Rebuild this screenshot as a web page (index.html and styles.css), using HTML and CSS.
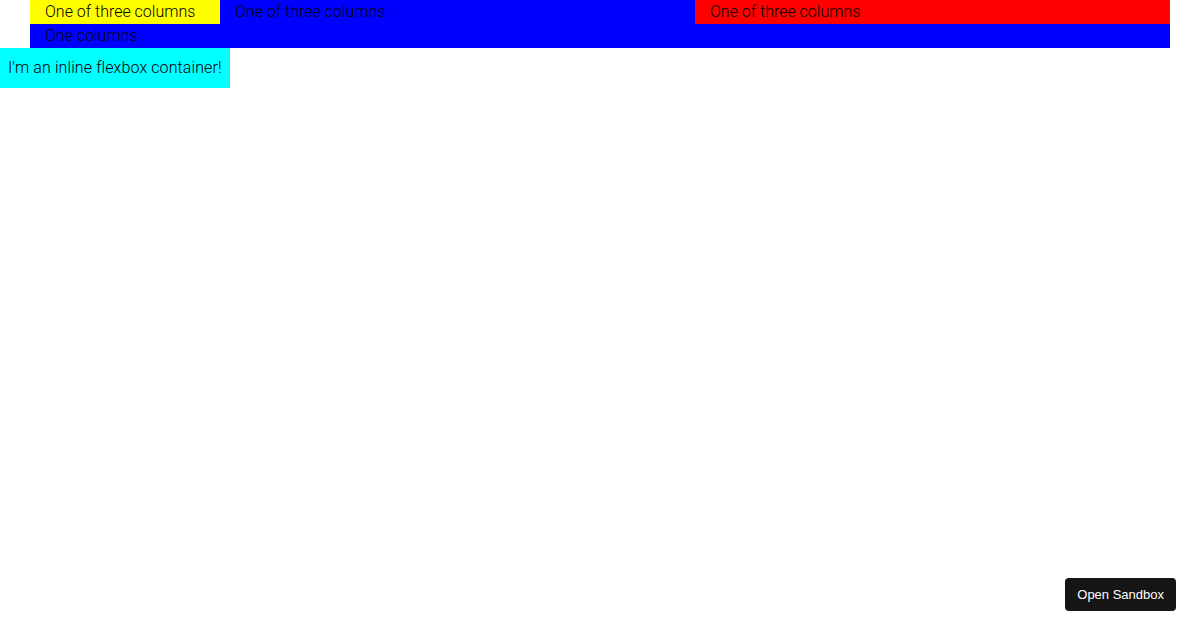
FILE: index.html
```html
<!DOCTYPE html>
<html>
<head>
<meta charset="utf-8">
<link rel="stylesheet" href="styles.css">
</head>
<body>
<div class="row">
  <div class="col col-yellow">One of three columns</div>
  <div class="col col-blue">One of three columns</div>
  <div class="col col-red">One of three columns</div>
</div>
<div class="row">
  <div class="col col-blue">One columns</div>
</div>
<div class="inline-flex">I'm an inline flexbox container!</div>
<a class="sandbox-btn">Open Sandbox</a>
</body>
</html>
```

FILE: styles.css
```css
html, body {
  margin: 0;
  padding: 0;
  background: #fff;
}
body {
  font-family: Roboto, "Liberation Sans", sans-serif;
  font-weight: 300;
  font-size: 16px;
  line-height: 24px;
  color: #000;
}
.row {
  display: flex;
  margin: 0 30px;
}
.col {
  padding: 0 15px;
  flex: 1 1 0;
  height: 24px;
  white-space: nowrap;
}
.col-yellow {
  background: #ffff00;
  flex: 0 0 190px;
  box-sizing: border-box;
}
.col-blue {
  background: #0000ff;
}
.col-red {
  background: #ff0000;
}
.inline-flex {
  display: inline-flex;
  background: #00ffff;
  padding: 8px;
  letter-spacing: 0.1px;
  white-space: nowrap;
}
.sandbox-btn {
  position: fixed;
  right: 24px;
  bottom: 19px;
  background: #151515;
  color: #fff;
  font-family: "Liberation Sans", Arial, sans-serif;
  font-weight: 400;
  font-size: 13px;
  line-height: 17px;
  padding: 8px 12px;
  border-radius: 4px;
}
```
